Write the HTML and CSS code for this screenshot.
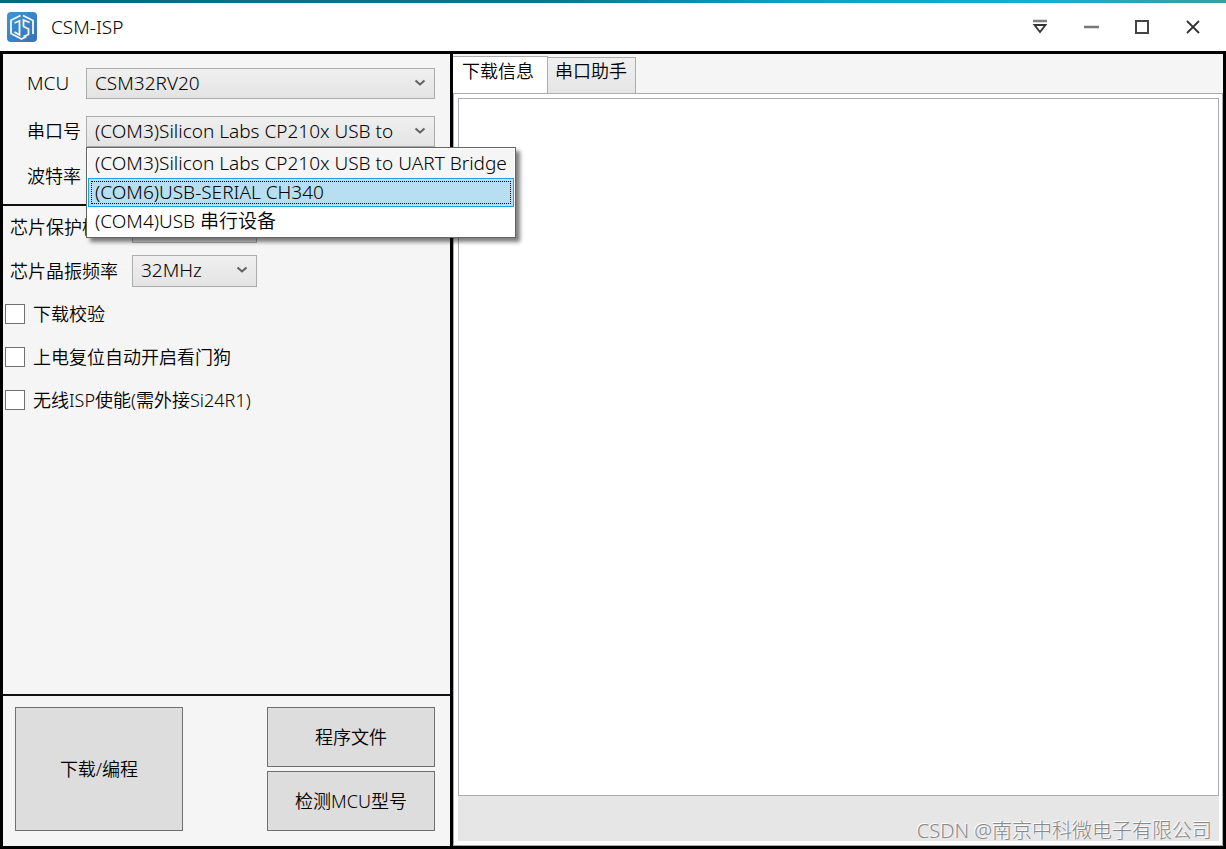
FILE: index.html
```
<!DOCTYPE html>
<html lang="zh-CN">
<head>
  <meta charset="UTF-8" />
  <meta name="viewport" content="width=device-width, initial-scale=1.0"/>
  <title>CSM-ISP</title>
  <link rel="stylesheet" href="styles.css">
</head>
<body>
  <div class="window">
    <header class="titlebar">
      <svg class="logo" width="32" height="32" viewBox="0 0 32 32">
        <defs>
          <linearGradient id="logoBg" x1="0" y1="0" x2="1" y2="1">
            <stop offset="0" stop-color="#3b97d3"/>
            <stop offset="1" stop-color="#3a70b5"/>
          </linearGradient>
        </defs>
        <rect x="1" y="1" width="30" height="30" rx="4" fill="url(#logoBg)"/>
        <g fill="none" stroke="#f4f9fd" stroke-width="1.8">
          <path d="M14.500 4.500 5 9.300V22.500l10.500 5.500 5-2.500"/>
          <path d="M17 4.500 27 9.500V23"/>
          <path d="M8.500 12 13.500 9.800V24L8.500 21"/>
          <path d="M23.500 11.500 17.500 9V15.500l5 2.500v5.500l-5 2"/>
        </g>
      </svg>
      <h1>CSM-ISP</h1>
      <div class="window-buttons">
        <button type="button" aria-label="菜单">
          <svg width="18" height="18" viewBox="0 0 18 18"><path d="M2 3h14" stroke="#808080" stroke-width="2.500"/><path d="M3.500 7h11L9 14z" fill="none" stroke="#333" stroke-width="1.800"/></svg>
        </button>
        <button type="button" aria-label="最小化">
          <svg width="18" height="18" viewBox="0 0 18 18"><path d="M2 9h15" stroke="#777" stroke-width="2.500"/></svg>
        </button>
        <button type="button" aria-label="最大化">
          <svg width="18" height="18" viewBox="0 0 18 18"><rect x="3" y="3" width="12" height="12" fill="none" stroke="#444" stroke-width="2"/></svg>
        </button>
        <button type="button" aria-label="关闭">
          <svg width="18" height="18" viewBox="0 0 18 18"><path d="M3 3l12 12M15 3L3 15" stroke="#333" stroke-width="1.800"/></svg>
        </button>
      </div>
    </header>

    <main class="content">
      <div class="sidebar">
        <section class="connection">
          <label for="mcu" class="latin">MCU</label>
          <select id="mcu"><option>CSM32RV20</option></select>

          <label for="port">串口号</label>
          <div class="combo">
            <select id="port">
              <option>(COM3)Silicon Labs CP210x USB to UART Bridge</option>
              <option>(COM6)USB-SERIAL CH340</option>
              <option>(COM4)USB 串行设备</option>
            </select>
            <ul class="dropdown" role="listbox" aria-label="串口号">
              <li class="current" role="option">(COM3)Silicon Labs CP210x USB to UART Bridge</li>
              <li class="active" role="option" aria-selected="true">(COM6)USB-SERIAL CH340</li>
              <li role="option">(COM4)USB 串行设备</li>
            </ul>
          </div>

          <label for="baud">波特率</label>
          <select id="baud"></select>
        </section>

        <section class="options">
          <div class="option-row">
            <label for="protect">芯片保护模式</label>
            <select id="protect"></select>
          </div>
          <div class="option-row">
            <label for="freq">芯片晶振频率</label>
            <select id="freq"><option>32MHz</option></select>
          </div>
          <label class="check"><input type="checkbox"> 下载校验</label>
          <label class="check"><input type="checkbox"> 上电复位自动开启看门狗</label>
          <label class="check"><input type="checkbox"> 无线ISP使能(需外接Si24R1)</label>
        </section>

        <section class="actions">
          <button type="button" class="btn btn-download">下载/编程</button>
          <button type="button" class="btn">程序文件</button>
          <button type="button" class="btn">检测MCU型号</button>
        </section>
      </div>

      <div class="output">
        <div class="tabs" role="tablist">
          <button type="button" class="tab selected" role="tab" aria-selected="true">下载信息</button>
          <button type="button" class="tab" role="tab">串口助手</button>
        </div>
        <div class="tab-page">
          <textarea class="log" aria-label="下载信息" readonly></textarea>
          <footer class="status">
            <span class="watermark">CSDN @南京中科微电子有限公司</span>
          </footer>
        </div>
      </div>
    </main>
  </div>
</body>
</html>
```
FILE: styles.css
```
* { box-sizing: border-box; margin: 0; padding: 0; }
body, button, select, textarea {
  font-family: "Noto Sans", "Noto Sans CJK SC", sans-serif;
  font-size: 18px;
  font-weight: 350;
  line-height: 24px;
  color: #000;
}
.window {
  display: flex;
  flex-direction: column;
  height: 100vh;
  background: #fff;
  border-top: 3px solid;
  border-image: linear-gradient(to right, #04697f, #04788e 45%, #08a5bd 65%, #10b2c8 85%, #3d9ba6) 1;
}
.titlebar {
  display: flex;
  align-items: center;
  height: 48px;
  padding: 0 8px 0 6px;
}
.titlebar h1 {
  margin-left: 13px;
  font-size: 19px;
  font-weight: 350;
}
.window-buttons {
  display: flex;
  margin-left: auto;
}
.window-buttons button {
  display: flex;
  align-items: center;
  justify-content: center;
  width: 51px;
  height: 40px;
  border: none;
  background: none;
}
.content {
  flex: 1;
  display: flex;
  gap: 3px;
  min-height: 0;
  padding: 3px;
  background: #000;
}
.sidebar {
  display: flex;
  flex-direction: column;
  flex: 0 0 447px;
  background: #f5f5f5;
}
select {
  appearance: none;
  width: 100%;
  height: 31px;
  padding: 0 36px 2px 8px;
  border: 1px solid #acacac;
  border-radius: 0;
  font-size: 19px;
  background: url("data:image/svg+xml,%3Csvg xmlns='http://www.w3.org/2000/svg' width='12' height='8'%3E%3Cpath d='M1.500 1.500 6 5.500 10.500 1.500' fill='none' stroke='%23606060' stroke-width='2'/%3E%3C/svg%3E") no-repeat right 8px top 10px, linear-gradient(#f0f0f0, #e3e3e3);
}
.connection {
  display: grid;
  grid-template: 31px 31px 26px / 59px 1fr;
  align-items: center;
  row-gap: 17px;
  padding: 14px 15px 0 24px;
  height: 150px;
}
.connection label {
  padding-bottom: 2px;
}
.connection .latin {
  font-size: 19px;
}
.combo {
  position: relative;
}
.combo select {
  display: block;
}
/* the open list lies over the rows below and the right pane */
.dropdown {
  position: absolute;
  z-index: 10;
  top: 100%;
  left: 0;
  padding: 1px;
  border: 1px solid #646464;
  background: #fff;
  list-style: none;
  font-size: 19px;
  white-space: nowrap;
  box-shadow: 4px 4px 4px rgba(0,0,0,0.5);
}
.dropdown li {
  height: 29px;
  padding: 2px 7px;
}
.dropdown .current {
  background: #f5f5f5;
}
.dropdown .active {
  border: 1px solid #26a0da;
  padding: 1px 6px;
  background: #b8dff1;
  outline: 1px dotted #000;
  outline-offset: -4px;
}
.options {
  flex: 1;
  border-top: 2px solid #111;
  padding: 5px 2px;
}
.option-row {
  display: flex;
  align-items: center;
  height: 32px;
  margin-bottom: 12px;
}
.option-row label {
  width: 127px;
  padding-left: 5px;
}
.option-row select {
  width: 125px;
  height: 32px;
}
.check {
  display: flex;
  align-items: center;
  gap: 8px;
  height: 30px;
  margin-bottom: 13px;
}
.check input {
  appearance: none;
  width: 20px;
  height: 20px;
  border: 1px solid #707070;
  background: #fff;
}
.actions {
  display: grid;
  grid-template: 60px 60px / 168px 168px;
  justify-content: space-between;
  row-gap: 4px;
  padding: 11px 15px 15px 12px;
  border-top: 2px solid #111;
}
.btn {
  border: 1px solid #707070;
  background: #ddd;
}
.btn-download {
  grid-row: span 2;
}
.output {
  flex: 1;
  display: flex;
  flex-direction: column;
  min-width: 0;
  background: #f5f5f5;
}
.tabs {
  display: flex;
  align-items: flex-end;
  height: 39px;
}
.tab {
  height: 36px;
  padding: 0 8px 9px 7px;
  border: 1px solid #acacac;
  border-left: none;
  border-bottom: none;
  background: linear-gradient(#f0f0f0, #e5e5e5);
}
.tab.selected {
  height: 37px;
  padding: 0 13px 9px 9px;
  background: #fff;
}
.tab-page {
  flex: 1;
  display: flex;
  flex-direction: column;
  padding: 4px 3px 4px 4px;
  border: 1px solid #acacac;
  background: #fff;
}
.log {
  flex: 1;
  width: 100%;
  border: 1px solid #abadb3;
  background: #fff;
  resize: none;
}
.status {
  display: flex;
  align-items: flex-end;
  justify-content: flex-end;
  height: 45px;
  padding-right: 7px;
  background: #e6e6e6;
}
.watermark {
  font-size: 20px;
  font-weight: 300;
  line-height: 20px;
  color: #888;
  text-shadow: -1px -1px 0 #fff;
}
```
